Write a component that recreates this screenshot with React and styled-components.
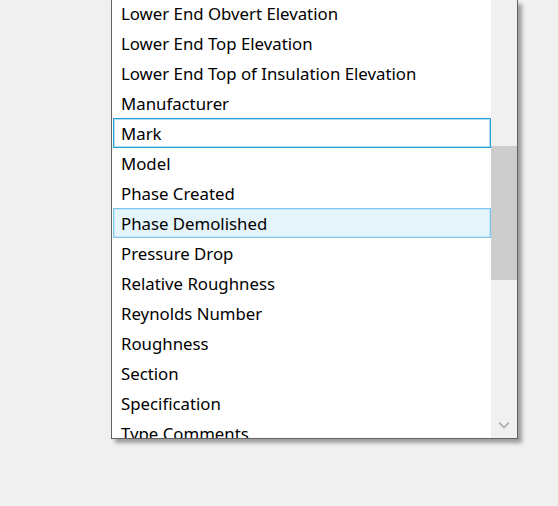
import React from "react";
import styled, { createGlobalStyle } from "styled-components";

const GlobalStyle = createGlobalStyle`
  html, body {
    margin: 0;
    padding: 0;
    background: #f0f0f0;
    overflow: hidden;
  }
`;

const Page = styled.div`
  width: 558px;
  height: 506px;
  padding-left: 111px;
  box-sizing: border-box;
`;

const Dropdown = styled.div`
  width: 407px;
  height: 439px;
  box-sizing: border-box;
  display: flex;
  background: #ffffff;
  border: 1px solid #646464;
  border-top: none;
  box-shadow: 4px 4px 4px rgba(0, 0, 0, 0.35);
`;

const Viewport = styled.div`
  flex: 1;
  overflow: hidden;
`;

const List = styled.ul`
  list-style: none;
  margin: -2px 0 0 0;
  padding: 0 0 0 1px;
`;

const Item = styled.li`
  height: 30px;
  box-sizing: border-box;
  display: flex;
  align-items: center;
  padding: 1px 0 0 7px;
  font-family: "Noto Sans", "Open Sans", sans-serif;
  font-size: 16.8px;
  color: #000000;
  white-space: nowrap;
  border: 1px solid
    ${(p) => (p.$focused ? "#26a0da" : p.$hovered ? "#7fc6ee" : "transparent")};
  background: ${(p) => (p.$hovered ? "#e5f3fb" : "transparent")};
  box-shadow: ${(p) =>
    p.$focused
      ? "inset 0 0 0 1px #b3dcf3"
      : p.$hovered
      ? "inset 0 0 0 1px #c4e6f8"
      : "none"};
`;

const Scrollbar = styled.div`
  width: 26px;
  display: flex;
  flex-direction: column;
  background: #f0f0f0;
`;

const Track = styled.div`
  flex: 1;
`;

const Thumb = styled.div`
  margin-top: ${(p) => p.$top}px;
  height: ${(p) => p.$height}px;
  background: #cdcdcd;
`;

const ArrowButton = styled.div`
  height: 26px;
  display: flex;
  align-items: center;
  justify-content: center;
`;

const items = [
  "Lower End Obvert Elevation",
  "Lower End Top Elevation",
  "Lower End Top of Insulation Elevation",
  "Manufacturer",
  "Mark",
  "Model",
  "Phase Created",
  "Phase Demolished",
  "Pressure Drop",
  "Relative Roughness",
  "Reynolds Number",
  "Roughness",
  "Section",
  "Specification",
  "Type Comments",
];

export default function App() {
  return (
    <Page>
      <GlobalStyle />
      <Dropdown>
        <Viewport>
          <List>
            {items.map((name) => (
              <Item
                key={name}
                $focused={name === "Mark"}
                $hovered={name === "Phase Demolished"}
              >
                {name}
              </Item>
            ))}
          </List>
        </Viewport>
        <Scrollbar>
          <Track>
            <Thumb $top={146} $height={134} />
          </Track>
          <ArrowButton>
            <svg width="12" height="8" viewBox="0 0 12 8">
              <path d="M1 1.5 L6 6.5 L11 1.5" fill="none" stroke="#a3a3a3" strokeWidth="1.4" />
            </svg>
          </ArrowButton>
        </Scrollbar>
      </Dropdown>
    </Page>
  );
}
